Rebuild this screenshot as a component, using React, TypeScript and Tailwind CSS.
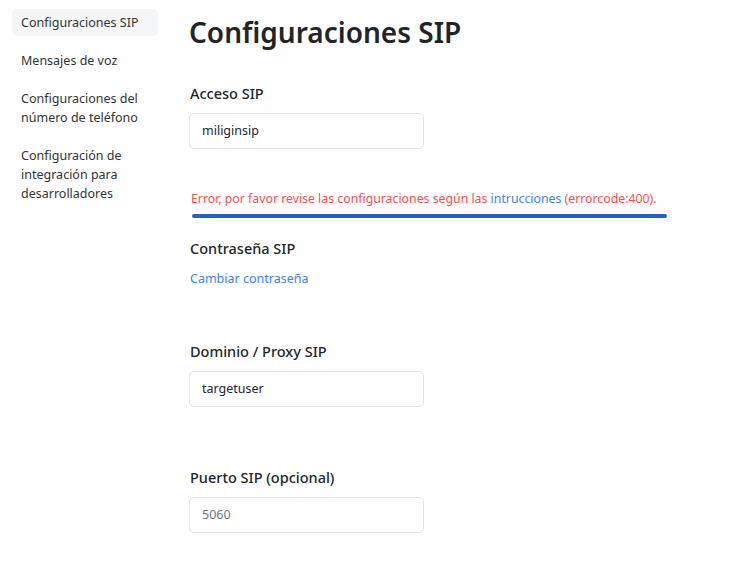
const sideItems = [
  "Configuraciones SIP",
  "Mensajes de voz",
  "Configuraciones del número de teléfono",
  "Configuración de integración para desarrolladores",
]

function Field({ value, placeholder }: { value?: string; placeholder?: string }) {
  return (
    <div className="w-[235px] h-[36px] border border-[#e3e5e8] rounded-[5px] flex items-center px-3 text-[12.5px]">
      {value ? (
        <span className="text-[#212529]">{value}</span>
      ) : (
        <span className="text-[#6c757d]">{placeholder}</span>
      )}
    </div>
  )
}

export default function App() {
  return (
    <div
      className="w-[740px] h-[563px] bg-white flex overflow-hidden"
      style={{ fontFamily: '"Noto Sans", "Open Sans", sans-serif' }}
    >
      <aside className="w-[158px] shrink-0 pl-3 pt-[9px] flex flex-col gap-[11px]">
        {sideItems.map((item, i) => (
          <div
            key={item}
            className={`px-[9px] py-[4px] text-[12.5px] leading-[19px] text-[#333] rounded-[5px] ${
              i === 0 ? "bg-[#f5f6f7]" : ""
            }`}
          >
            {item}
          </div>
        ))}
      </aside>

      <main className="flex-1 pl-[31px] pt-[12px] text-[#212529]">
        <h1 className="text-[28px] leading-[40px] font-semibold">Configuraciones SIP</h1>

        <div className="mt-[30px] text-[14.5px] font-medium leading-[22px] pl-px">Acceso SIP</div>
        <div className="mt-[9px]">
          <Field value="miliginsip" />
        </div>

        <div className="mt-[41px] text-[12.3px] leading-[18px] text-[#f2524e] pl-[2px]">
          Error, por favor revise las configuraciones según las{" "}
          <span className="text-[#3a82f0]">intrucciones</span> (errorcode:400).
        </div>
        <div className="mt-[6px] ml-[3px] w-[475px] h-[4px] rounded-full bg-[#2463c0]" />

        <div className="mt-[19px] text-[14.5px] font-medium leading-[22px] pl-px">Contraseña SIP</div>
        <div className="mt-[11px] text-[12.5px] leading-[18px] text-[#3a82f0] pl-px">Cambiar contraseña</div>

        <div className="mt-[52px] text-[14.5px] font-medium leading-[22px] pl-px">Dominio / Proxy SIP</div>
        <div className="mt-[9px]">
          <Field value="targetuser" />
        </div>

        <div className="mt-[59px] text-[14.5px] font-medium leading-[22px] pl-px">Puerto SIP (opcional)</div>
        <div className="mt-[9px]">
          <Field placeholder="5060" />
        </div>
      </main>
    </div>
  )
}
